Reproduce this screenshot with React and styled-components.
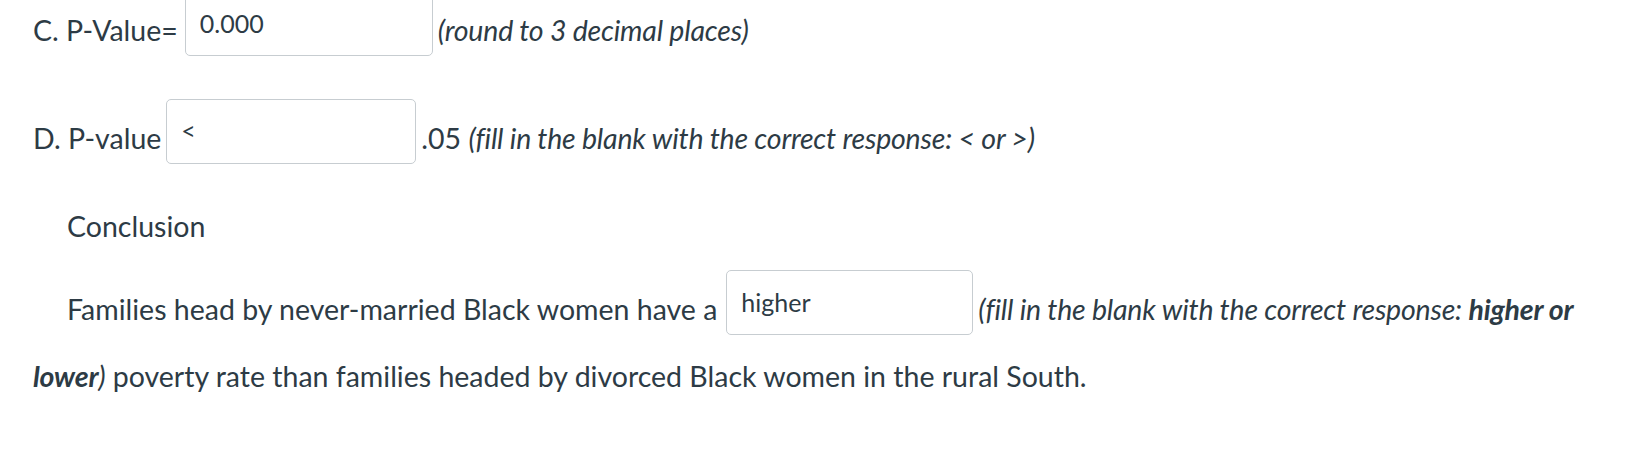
import React from 'react';
import styled, { createGlobalStyle } from 'styled-components';

const GlobalStyle = createGlobalStyle`
  html, body {
    margin: 0;
    padding: 0;
    background: #ffffff;
  }
  body {
    font-family: Lato, "Open Sans", sans-serif;
    color: #2d3b45;
  }
`;

const Page = styled.div`
  width: 1632px;
  height: 472px;
  overflow: hidden;
  padding: 0 30px 0 33px;
  box-sizing: border-box;
  font-size: 28.5px;
  line-height: 67px;
`;

const Para = styled.p`
  margin: ${(p) => p.$mt || 0}px 0 0 0;
  text-indent: ${(p) => (p.$indent ? '34px' : '0')};
`;

const Hint = styled.em`
  font-style: italic;
  letter-spacing: -0.2px;
  strong {
    font-weight: 700;
  }
`;

const Blank = styled.input`
  box-sizing: border-box;
  width: ${(p) => p.$w || 246}px;
  height: 65px;
  margin: 0 5px 0 ${(p) => p.$ml || 6}px;
  padding: 0 14px 2px;
  border: 1px solid #c7cdd1;
  border-radius: 5px;
  background: #fff;
  font-family: Lato, "Open Sans", sans-serif;
  font-size: 25px;
  line-height: normal;
  color: #2d3b45;
  vertical-align: 8px;
  text-indent: 0;
  outline: none;
`;

export default function App() {
  return (
    <>
      <GlobalStyle />
      <Page>
        <Para $mt={-9}>
          C. P-Value=
          <Blank defaultValue="0.000" $w={248} $ml={7} />
          <Hint>(round to 3 decimal places)</Hint>
        </Para>

        <Para $mt={35}>
          D. P-value
          <Blank defaultValue="<" $w={250} $ml={5} />
          .05 <Hint>(fill in the blank with the correct response: &lt; or &gt;)</Hint>
        </Para>

        <Para $mt={22} $indent>
          Conclusion
        </Para>

        <Para $mt={10} $indent>
          Families head by never-married Black women have a
          <Blank defaultValue="higher" $w={247} $ml={9} />
          <Hint>
            (fill in the blank with the correct response: <strong>higher or lower</strong>)
          </Hint>{' '}
          poverty rate than families headed by divorced Black women in the rural South.
        </Para>
      </Page>
    </>
  );
}
